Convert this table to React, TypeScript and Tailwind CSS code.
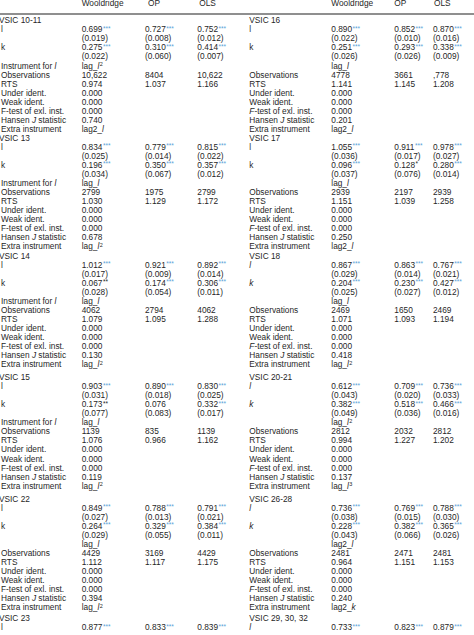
import type { ReactNode } from 'react'

type Sec = {
  t: string
  gap?: number
  it?: boolean
  l: string[]
  ls?: string[]
  k?: string[]
  ks?: string[]
  inst?: string
  instLabel?: boolean
  obs?: string[]
  rts?: string[]
  u?: string
  w?: string
  f?: string
  h?: string
  x?: string
}

const LEFT_COLS = 'grid-cols-[80.7px_63.3px_52.3px_1fr]'
const RIGHT_COLS = 'grid-cols-[82px_63px_38.7px_1fr]'

const left: Sec[] = [
  {
    t: 'VSIC 10-11',
    l: ['0.699***', '0.727***', '0.752***'], ls: ['(0.019)', '(0.008)', '(0.012)'],
    k: ['0.275***', '0.310***', '0.414***'], ks: ['(0.022)', '(0.060)', '(0.007)'],
    inst: 'lag_l2', instLabel: true,
    obs: ['10,622', '8404', '10,622'], rts: ['0.974', '1.037', '1.166'],
    u: '0.000', w: '0.000', f: '0.000', h: '0.740', x: 'lag2_l',
  },
  {
    t: 'VSIC 13',
    l: ['0.834***', '0.779***', '0.815***'], ls: ['(0.025)', '(0.014)', '(0.022)'],
    k: ['0.196***', '0.350***', '0.357***'], ks: ['(0.034)', '(0.067)', '(0.012)'],
    inst: 'lag_l', instLabel: true,
    obs: ['2799', '1975', '2799'], rts: ['1.030', '1.129', '1.172'],
    u: '0.000', w: '0.000', f: '0.000', h: '0.678', x: 'lag_l2',
  },
  {
    t: 'VSIC 14',
    l: ['1.012***', '0.921***', '0.892***'], ls: ['(0.017)', '(0.009)', '(0.014)'],
    k: ['0.067**', '0.174***', '0.306***'], ks: ['(0.028)', '(0.054)', '(0.011)'],
    inst: 'lag_l', instLabel: true,
    obs: ['4062', '2794', '4062'], rts: ['1.079', '1.095', '1.288'],
    u: '0.000', w: '0.000', f: '0.000', h: '0.130', x: 'lag_l2',
  },
  {
    t: 'VSIC 15', gap: 4,
    l: ['0.903***', '0.890***', '0.830***'], ls: ['(0.031)', '(0.018)', '(0.025)'],
    k: ['0.173**', '0.076', '0.332***'], ks: ['(0.077)', '(0.083)', '(0.017)'],
    inst: 'lag_l', instLabel: true,
    obs: ['1139', '835', '1139'], rts: ['1.076', '0.966', '1.162'],
    u: '0.000', w: '0.000', f: '0.000', h: '0.119', x: 'lag_l2',
  },
  {
    t: 'VSIC 22', gap: 4,
    l: ['0.849***', '0.788***', '0.791***'], ls: ['(0.027)', '(0.013)', '(0.021)'],
    k: ['0.264***', '0.329***', '0.384***'], ks: ['(0.029)', '(0.055)', '(0.011)'],
    inst: 'lag_l',
    obs: ['4429', '3169', '4429'], rts: ['1.112', '1.117', '1.175'],
    u: '0.000', w: '0.000', f: '0.000', h: '0.394', x: 'lag_l2',
  },
  { t: 'VSIC 23', gap: 2, l: ['0.877***', '0.833***', '0.839***'] },
]

const right: Sec[] = [
  {
    t: 'VSIC 16',
    l: ['0.890***', '0.852***', '0.870***'], ls: ['(0.022)', '(0.010)', '(0.016)'],
    k: ['0.251***', '0.293***', '0.338***'], ks: ['(0.026)', '(0.026)', '(0.009)'],
    inst: 'lag_l',
    obs: ['4778', '3661', ',778'], rts: ['1.141', '1.145', '1.208'],
    u: '0.000', w: '0.000', f: '0.000', h: '0.201', x: 'lag2_l',
  },
  {
    t: 'VSIC 17',
    l: ['1.055***', '0.911***', '0.978***'], ls: ['(0.036)', '(0.017)', '(0.027)'],
    k: ['0.096***', '0.128*', '0.280***'], ks: ['(0.037)', '(0.076)', '(0.014)'],
    inst: 'lag_l',
    obs: ['2939', '2197', '2939'], rts: ['1.151', '1.039', '1.258'],
    u: '0.000', w: '0.000', f: '0.000', h: '0.250', x: 'lag2_l',
  },
  {
    t: 'VSIC 18', it: true,
    l: ['0.867***', '0.863***', '0.767***'], ls: ['(0.029)', '(0.014)', '(0.021)'],
    k: ['0.204***', '0.230***', '0.427***'], ks: ['(0.025)', '(0.027)', '(0.012)'],
    inst: 'lag_l',
    obs: ['2469', '1650', '2469'], rts: ['1.071', '1.093', '1.194'],
    u: '0.000', w: '0.000', f: '0.000', h: '0.418', x: 'lag_l2',
  },
  {
    t: 'VSIC 20-21', gap: 4, it: true,
    l: ['0.612***', '0.709***', '0.736***'], ls: ['(0.043)', '(0.020)', '(0.033)'],
    k: ['0.382***', '0.518***', '0.466***'], ks: ['(0.049)', '(0.036)', '(0.016)'],
    inst: 'lag_l2',
    obs: ['2812', '2032', '2812'], rts: ['0.994', '1.227', '1.202'],
    u: '0.000', w: '0.000', f: '0.000', h: '0.137', x: 'lag_l3',
  },
  {
    t: 'VSIC 26-28', gap: 4, it: true,
    l: ['0.736***', '0.769***', '0.788***'], ls: ['(0.038)', '(0.015)', '(0.030)'],
    k: ['0.228***', '0.382***', '0.365***'], ks: ['(0.043)', '(0.066)', '(0.026)'],
    inst: 'lag2_l',
    obs: ['2481', '2471', '2481'], rts: ['0.964', '1.151', '1.153'],
    u: '0.000', w: '0.000', f: '0.000', h: '0.240', x: 'lag2_k',
  },
  { t: 'VSIC 29, 30, 32', gap: 2, it: true, l: ['0.733***', '0.823***', '0.879***'] },
]

function Val({ v }: { v: string }) {
  const m = v.match(/^([^*]*)(\*+)?$/)
  const num = m ? m[1] : v
  const stars = m ? m[2] : undefined
  return (
    <>
      {num}
      {stars && (
        <sup className={`text-[6.5px] -top-[1.6px] ml-[0.5px] ${stars.length === 3 ? 'text-[#5a9fd8]' : 'text-[#1f1f1f]'}`}>
          {stars}
        </sup>
      )}
    </>
  )
}

// lag_l, lag_l2, lag2_l, lag2_k ...
function Inst({ s }: { s: string }) {
  const m = s.match(/^(lag2?_)([lk])(\d)?$/)
  if (!m) return <>{s}</>
  return (
    <>
      {m[1]}<i>{m[2]}</i>
      {m[3] && <sup className="text-[5.5px] -top-[2.5px] ml-[0.5px]">{m[3]}</sup>}
    </>
  )
}

function Row({ cols, cells }: { cols: string; cells: ReactNode[] }) {
  return (
    <div className={`grid ${cols} h-[9.05px] leading-[9.05px] whitespace-nowrap`}>
      {cells.map((c, i) => (
        <div key={i}>{c}</div>
      ))}
    </div>
  )
}

function Section({ s, cols, side }: { s: Sec; cols: string; side: 'l' | 'r' }) {
  const lab = (x: string) => (s.it ? <i>{x}</i> : x)
  const three = (a?: string[]) => (a ?? []).map((v, i) => <Val key={i} v={v} />)
  const rows: ReactNode[][] = [[lab('l'), ...three(s.l)]]
  if (s.ls) {
    rows.push(
      ['', ...three(s.ls)],
      [lab('k'), ...three(s.k)],
      ['', ...three(s.ks)],
      [s.instLabel ? <>Instrument for <i>l</i></> : '', <Inst s={s.inst!} />, '', ''],
      ['Observations', ...three(s.obs)],
      ['RTS', ...three(s.rts)],
      ['Under ident.', s.u],
      ['Weak ident.', s.w],
      [side === 'r' ? <><i>F</i>-test of exl. inst.</> : 'F-test of exl. inst.', s.f],
      [<>Hansen <i>J</i> statistic</>, s.h],
      ['Extra instrument', <Inst s={s.x!} />],
    )
  }
  const mt = s.gap === 4 ? 'mt-[4px]' : s.gap === 2 ? 'mt-[2px]' : ''
  return (
    <>
      <div className={`h-[9.05px] leading-[9.05px] whitespace-nowrap ${side === 'l' ? '-ml-[2px]' : ''} ${mt}`}>
        {s.t}
      </div>
      {rows.map((r, i) => (
        <Row key={i} cols={cols} cells={r} />
      ))}
    </>
  )
}

function Header({ cols, side }: { cols: string; side: 'l' | 'r' }) {
  return (
    <div className={`grid ${cols} h-[9.05px] leading-[9.05px] -mt-[1.2px] whitespace-nowrap`}>
      <div />
      <div>Wooldridge</div>
      <div className={side === 'l' ? 'pl-[3px]' : ''}>OP</div>
      <div className={side === 'l' ? 'pl-[2px]' : 'pl-[1px]'}>OLS</div>
    </div>
  )
}

export default function App() {
  return (
    <div className="w-[474px] h-[635px] overflow-hidden bg-white text-[#1f1f1f] text-[8.3px] font-['Liberation_Sans',Arial,sans-serif]">
      <div className="flex h-[14.7px] border-b-2 border-[#8f8f8f]">
        <div className="w-[249px] pl-[1px]">
          <Header cols={LEFT_COLS} side="l" />
        </div>
        <div className="flex-1 pl-[0.3px]">
          <Header cols={RIGHT_COLS} side="r" />
        </div>
      </div>
      <div className="flex pt-[1.6px]">
        <div className="w-[249px] pl-[1px]">
          {left.map(s => (
            <Section key={s.t} s={s} cols={LEFT_COLS} side="l" />
          ))}
        </div>
        <div className="flex-1 pl-[0.3px]">
          {right.map(s => (
            <Section key={s.t} s={s} cols={RIGHT_COLS} side="r" />
          ))}
        </div>
      </div>
    </div>
  )
}
